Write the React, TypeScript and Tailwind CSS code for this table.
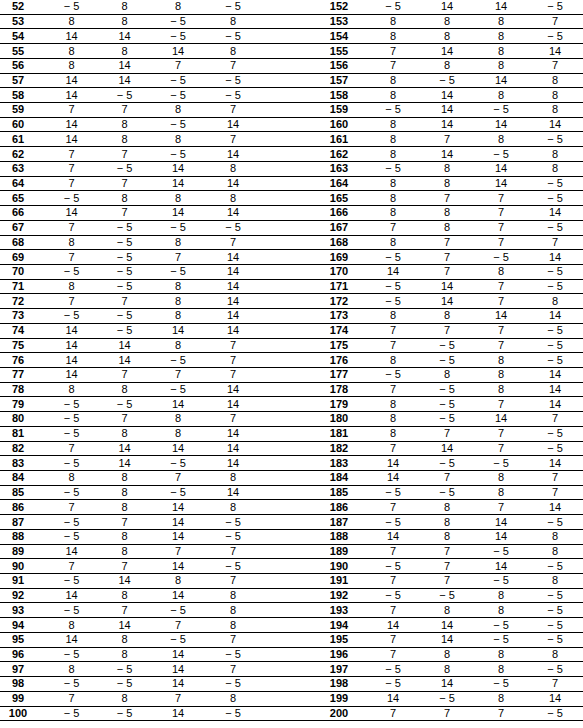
const M = '\u2212 5';

// rows: [label, c1, c2, c3, c4]; 0 stands for minus five
const left: number[][] = [
  [52, 0, 8, 8, 0], [53, 8, 8, 0, 8], [54, 14, 14, 0, 0], [55, 8, 8, 14, 8], [56, 8, 14, 7, 7],
  [57, 14, 14, 0, 0], [58, 14, 0, 0, 0], [59, 7, 7, 8, 7], [60, 14, 8, 0, 14], [61, 14, 8, 8, 7],
  [62, 7, 7, 0, 14], [63, 7, 0, 14, 8], [64, 7, 7, 14, 14], [65, 0, 8, 8, 8], [66, 14, 7, 14, 14],
  [67, 7, 0, 0, 0], [68, 8, 0, 8, 7], [69, 7, 0, 7, 14], [70, 0, 0, 0, 14], [71, 8, 0, 8, 14],
  [72, 7, 7, 8, 14], [73, 0, 0, 8, 14], [74, 14, 0, 14, 14], [75, 14, 14, 8, 7], [76, 14, 14, 0, 7],
  [77, 14, 7, 7, 7], [78, 8, 8, 0, 14], [79, 0, 0, 14, 14], [80, 0, 7, 8, 7], [81, 0, 8, 8, 14],
  [82, 7, 14, 14, 14], [83, 0, 14, 0, 14], [84, 8, 8, 7, 8], [85, 0, 8, 0, 14], [86, 7, 8, 14, 8],
  [87, 0, 7, 14, 0], [88, 0, 8, 14, 0], [89, 14, 8, 7, 7], [90, 7, 7, 14, 0], [91, 0, 14, 8, 7],
  [92, 14, 8, 14, 8], [93, 0, 7, 0, 8], [94, 8, 14, 7, 8], [95, 14, 8, 0, 7], [96, 0, 8, 14, 0],
  [97, 8, 0, 14, 7], [98, 0, 0, 14, 0], [99, 7, 8, 7, 8], [100, 0, 0, 14, 0],
];

const right: number[][] = [
  [152, 0, 14, 14, 0], [153, 8, 8, 8, 7], [154, 8, 8, 8, 0], [155, 7, 14, 8, 14], [156, 7, 8, 8, 7],
  [157, 8, 0, 14, 8], [158, 8, 14, 8, 8], [159, 0, 14, 0, 8], [160, 8, 14, 14, 14], [161, 8, 7, 8, 0],
  [162, 8, 14, 0, 8], [163, 0, 8, 14, 8], [164, 8, 8, 14, 0], [165, 8, 7, 7, 0], [166, 8, 8, 7, 14],
  [167, 7, 8, 7, 0], [168, 8, 7, 7, 7], [169, 0, 7, 0, 14], [170, 14, 7, 8, 0], [171, 0, 14, 7, 0],
  [172, 0, 14, 7, 8], [173, 8, 8, 14, 14], [174, 7, 7, 7, 0], [175, 7, 0, 7, 0], [176, 8, 0, 8, 0],
  [177, 0, 8, 8, 14], [178, 7, 0, 8, 14], [179, 8, 0, 7, 14], [180, 8, 0, 14, 7], [181, 8, 7, 7, 0],
  [182, 7, 14, 7, 0], [183, 14, 0, 0, 14], [184, 14, 7, 8, 7], [185, 0, 0, 8, 7], [186, 7, 8, 7, 14],
  [187, 0, 8, 14, 0], [188, 14, 8, 14, 8], [189, 7, 7, 0, 8], [190, 0, 7, 14, 0], [191, 7, 7, 0, 8],
  [192, 0, 0, 8, 0], [193, 7, 8, 8, 0], [194, 14, 14, 0, 0], [195, 7, 14, 0, 0], [196, 7, 8, 8, 8],
  [197, 0, 8, 8, 0], [198, 0, 14, 0, 7], [199, 14, 0, 8, 14], [200, 7, 7, 7, 0],
];

const show = (v: number) => (v === 0 ? M : String(v));

function Half({ row, wide }: { row: number[]; wide?: boolean }) {
  const [label, a, b, c, d] = row;
  return (
    <div className={wide ? 'flex flex-1 items-center' : 'flex w-[321px] items-center'}>
      <span className="w-[36px] text-center font-bold">{label}</span>
      <span className={wide ? 'ml-[9px] w-[54px] text-center' : 'ml-[9px] w-[53px] text-center'}>{show(a)}</span>
      <span className={wide ? 'w-[54px] text-center' : 'w-[53px] text-center'}>{show(b)}</span>
      <span className="w-[54px] text-center">{show(c)}</span>
      <span className={wide ? 'w-[54px] text-center' : 'w-[56px] text-center'}>{show(d)}</span>
    </div>
  );
}

export default function App() {
  return (
    <div className="w-[583px] h-[728px] bg-white text-black text-[11px] leading-[13px] font-['Liberation_Sans',Arial,sans-serif] overflow-hidden">
      {left.map((row, i) => (
        <div key={row[0]} className="flex h-[14.72px] border-b border-black">
          <Half row={row} />
          <Half row={right[i]} wide />
        </div>
      ))}
    </div>
  );
}
